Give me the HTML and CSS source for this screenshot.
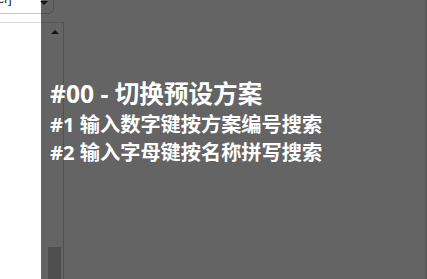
FILE: index.html
```html
<!DOCTYPE html>
<html lang="zh-CN">
<head>
  <meta charset="UTF-8">
  <title>切换预设方案</title>
  <link rel="stylesheet" href="styles.css">
</head>
<body>
  <div class="page">
    <aside class="sidebar">
      <div class="toolbar">
        <div class="select">
          <span class="select-text">[Power]</span>
          <span class="select-arrow"></span>
        </div>
      </div>
      <div class="sidebar-body">
        <div class="list"></div>
        <div class="scrollbar">
          <span class="scroll-up"></span>
          <span class="scroll-thumb"></span>
        </div>
      </div>
    </aside>
    <main class="main"></main>
  </div>

  <section class="overlay">
    <div class="hint">
      <p class="hint-title">#00 - 切换预设方案</p>
      <p class="hint-line">#1 输入数字键按方案编号搜索</p>
      <p class="hint-line">#2 输入字母键按名称拼写搜索</p>
    </div>
  </section>
</body>
</html>
```

FILE: styles.css
```css
*,
*::before,
*::after{
  box-sizing: border-box;
}
html, body{
  margin: 0;
  width: 427px;
  height: 279px;
  overflow: hidden;
}
body{
  position: relative;
  font-family: "Open Sans", "Noto Sans CJK SC", sans-serif;
  background: #fafafa;
}
.page{
  display: flex;
  height: 100%;
}
.sidebar{
  width: 64px;
  display: flex;
  flex-direction: column;
  background: #fff;
}
.toolbar{
  height: 23px;
  border-bottom: 1px solid #d8d8d8;
  background: #fff;
  overflow: hidden;
}
.select{
  position: relative;
  width: 120px;
  height: 27px;
  margin: -13px 0 0 -66px;
  border: 1px solid #c8c8c8;
  border-radius: 5px;
  background: #fff;
  font-family: "Liberation Sans", sans-serif;
  font-size: 12px;
  color: #111;
  padding: 4px 0 0 36px;
}
.select-arrow{
  position: absolute;
  left: 105px;
  top: 13px;
  border-left: 4px solid transparent;
  border-right: 4px solid transparent;
  border-top: 4px solid #333;
}
.sidebar-body{
  flex: 1;
  display: flex;
}
.list{
  flex: 1;
  background: #fff;
}
.scrollbar{
  width: 18px;
  display: flex;
  flex-direction: column;
  align-items: center;
  justify-content: space-between;
  background: #fff;
  border-right: 1px solid #d0d0d0;
  padding: 7px 0 0;
}
.scroll-up{
  border-left: 4px solid transparent;
  border-right: 4px solid transparent;
  border-bottom: 4px solid #333;
}
.scroll-thumb{
  width: 13px;
  height: 34px;
  margin-bottom: -2px;
  background: #c8c8c8;
}
.main{
  flex: 1;
  background: #fff;
  border-right: 2px solid #e2e2e2;
}
.overlay{
  position: absolute;
  top: 0;
  left: 41px;
  right: 0;
  bottom: 0;
  background: rgba(0, 0, 0, 0.607);
}
.hint{
  padding: 78px 0 0 9px;
  color: #fff;
  font-weight: bold;
}
.hint p{
  margin: 0;
  white-space: nowrap;
}
.hint-title{
  font-size: 24.6px;
  line-height: 32px;
}
.hint-line{
  font-size: 20.2px;
  line-height: 28px;
}
```
